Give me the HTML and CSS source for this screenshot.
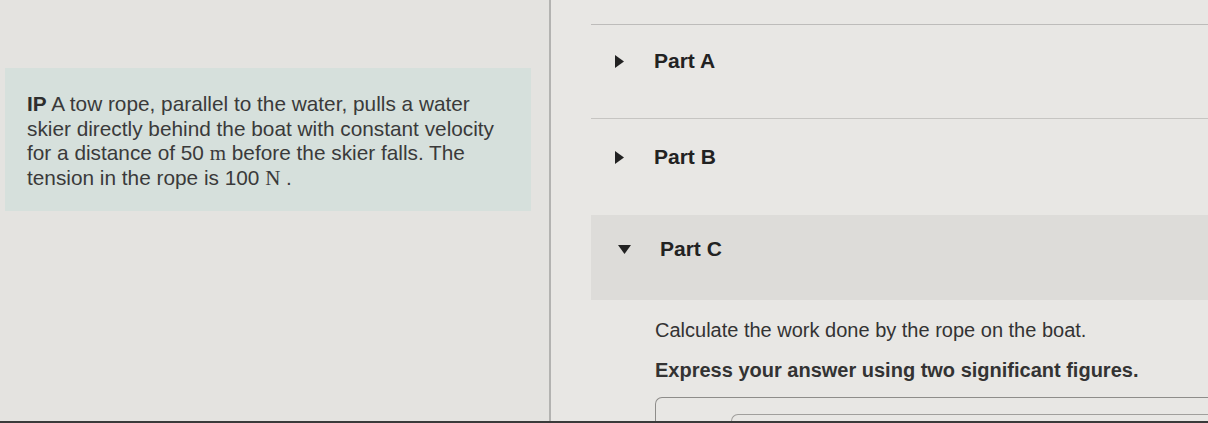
FILE: index.html
```html
<!DOCTYPE html>
<html>
<head>
<meta charset="utf-8">
<link rel="stylesheet" href="styles.css">
</head>
<body>
<div class="page">
  <div class="left">
    <div class="problem">
      <p class="intro"><b>IP</b> A tow rope, parallel to the water, pulls a water skier directly behind the boat with constant velocity for a distance of 50 <span class="math">m</span> before the skier falls. The tension in the rope is 100 <span class="math">N</span> .</p>
    </div>
  </div>
  <div class="right">
    <div class="part part-a">
      <div class="part-head">
        <svg class="tri" width="9" height="13" viewBox="0 0 9 13"><path d="M0 0 L9 6.5 L0 13 Z" fill="#222"/></svg>
        <span class="part-title">Part A</span>
      </div>
    </div>
    <div class="part part-b">
      <div class="part-head">
        <svg class="tri" width="9" height="13" viewBox="0 0 9 13"><path d="M0 0 L9 6.5 L0 13 Z" fill="#222"/></svg>
        <span class="part-title">Part B</span>
      </div>
    </div>
    <div class="part part-c">
      <div class="part-head open">
        <svg class="tri-down" width="13" height="9" viewBox="0 0 13 9"><path d="M0 0 L13 0 L6.5 9 Z" fill="#222"/></svg>
        <span class="part-title">Part C</span>
      </div>
    </div>
    <div class="part-body">
      <p class="question">Calculate the work done by the rope on the boat.</p>
      <p class="instr">Express your answer using two significant figures.</p>
      <div class="answer-box">
        <div class="inner-box"></div>
      </div>
    </div>
  </div>
</div>
<div class="bezel"></div>
</body>
</html>
```

FILE: styles.css
```css
html, body {
  margin: 0;
  padding: 0;
}
body {
  width: 1208px;
  height: 423px;
  overflow: hidden;
  background: #e5e4e1;
  font-family: "Liberation Sans", Arial, sans-serif;
  color: #333;
}
.page {
  display: flex;
  height: 421px;
  overflow: hidden;
}
.left {
  width: 551px;
  border-right: 2px solid #b3b3b1;
  padding-top: 68px;
  box-sizing: border-box;
  background: #e4e3e0;
}
.problem {
  margin-left: 5px;
  width: 526px;
  height: 143px;
  box-sizing: border-box;
  background: #d6e0dc;
  padding: 24px 20px 0 22px;
}
.intro {
  margin: 0;
  font-size: 20.8px;
  line-height: 24.7px;
  width: 477px;
  color: #3a3a3a;
}
.intro b {
  color: #2e2e2e;
}
.math {
  font-family: "Liberation Serif", "Times New Roman", serif;
  font-size: 21px;
  line-height: 1;
}
.right {
  flex: 1;
  padding-top: 24px;
  padding-left: 40px;
  background: #e8e7e4;
}
.part {
  box-sizing: border-box;
}
.part-a {
  height: 94px;
  border-top: 1px solid #bdbcba;
  padding-top: 24px;
}
.part-b {
  height: 97px;
  border-top: 1px solid #c6c5c2;
  padding-top: 26px;
}
.part-c {
  height: 85px;
  background: #dddcd9;
  padding-top: 22px;
}
.part-head {
  display: flex;
  align-items: center;
  height: 24px;
  padding-left: 24px;
}
.part-c .part-head {
  padding-left: 27px;
}
.tri, .tri-down {
  flex: none;
}
.part-title {
  font-weight: bold;
  font-size: 21px;
  color: #222;
  margin-left: 30px;
}
.part-c .part-title {
  margin-left: 29px;
}
.part-body {
  padding-left: 64px;
  padding-top: 19px;
}
.question {
  margin: 0;
  font-size: 20px;
  line-height: 22px;
  color: #333;
}
.instr {
  margin: 18px 0 0;
  font-size: 20px;
  line-height: 22px;
  font-weight: bold;
  color: #333;
}
.answer-box {
  margin-top: 16px;
  height: 40px;
  border: 1px solid #8e8d8a;
  border-right: none;
  border-radius: 7px 0 0 0;
  padding-left: 75px;
  padding-top: 16px;
  box-sizing: border-box;
}
.inner-box {
  height: 30px;
  border: 1px solid #a09f9c;
  border-right: none;
  border-radius: 7px 0 0 0;
}
.bezel {
  height: 2px;
  background: #3a3a3a;
}
```
